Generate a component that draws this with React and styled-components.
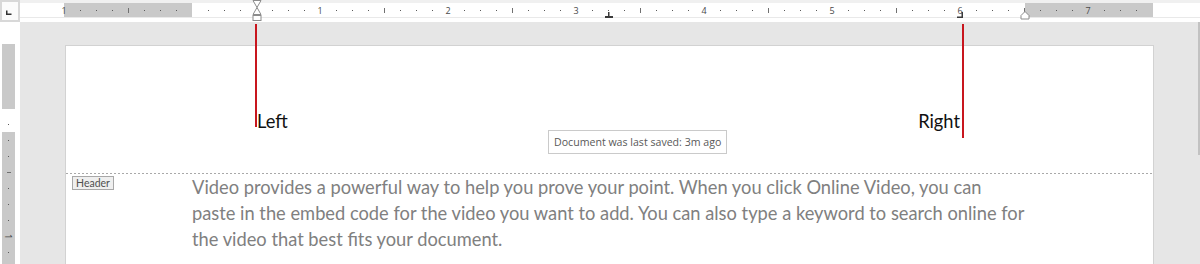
import React from "react";
import styled, { createGlobalStyle } from "styled-components";

const INCH = 128;
const ZERO = 192;

const GlobalStyle = createGlobalStyle`
  html, body {
    margin: 0;
    padding: 0;
    background: #e6e6e6;
  }
  body {
    font-family: "Open Sans", "Liberation Sans", sans-serif;
  }
`;

const Screen = styled.div`
  position: relative;
  width: 1200px;
  height: 264px;
  overflow: hidden;
  display: grid;
  grid-template-columns: 20px 1fr;
  grid-template-rows: 22px 1fr;
  background: #e6e6e6;
`;

/* ---------- tab selector (top-left corner) ---------- */

const TabSelector = styled.div`
  box-sizing: border-box;
  width: 20px;
  height: 22px;
  border: 2px solid #d8d8d8;
  background: #fbfbfb;
  z-index: 2;
`;

/* ---------- horizontal ruler ---------- */

const HRuler = styled.div`
  position: relative;
  box-sizing: border-box;
  background: #fff;
  border-top: 3px solid #f0f0f0;
  z-index: 2;
`;

const HTrack = styled.div`
  display: flex;
  height: 14px;
  padding-left: 36px;
  border-bottom: 1px solid #e9e9e9;
  background: linear-gradient(
    to right,
    #fff 0 44px,
    #c9c9c9 44px 172px,
    #fff 172px 1005px,
    #c9c9c9 1005px 1133px,
    #fff 1133px
  );
`;

const HCell = styled.div`
  flex: 0 0 16px;
  display: flex;
  align-items: center;
  justify-content: center;
`;

const Dot = styled.span`
  width: 1px;
  height: 1px;
  background: #5a5a5a;
`;

const HalfTick = styled.span`
  width: ${({ $vertical }) => ($vertical ? "4px" : "1px")};
  height: ${({ $vertical }) => ($vertical ? "1px" : "5px")};
  background: #707070;
`;

const Num = styled.span`
  font-family: "Open Sans", sans-serif;
  font-size: 9px;
  line-height: 1;
  color: #4a4a4a;
  transform: ${({ $vertical }) => ($vertical ? "rotate(90deg)" : "none")};
`;

const Marker = styled.svg`
  position: absolute;
  top: ${({ $top }) => $top}px;
  left: ${({ $left }) => $left}px;
  overflow: visible;
`;

/* ---------- vertical ruler ---------- */

const VRuler = styled.div`
  background: #fff;
  padding-left: 2px;
`;

const VTrack = styled.div`
  box-sizing: border-box;
  width: 13px;
  height: 100%;
  padding-top: 78px;
  display: flex;
  flex-direction: column;
  background: linear-gradient(
    to bottom,
    #fff 0 22px,
    #c9c9c9 22px 87px,
    #fff 87px 110px,
    #c9c9c9 110px
  );
`;

const VCell = styled.div`
  flex: 0 0 16px;
  display: flex;
  align-items: center;
  justify-content: center;
`;

/* ---------- canvas & page ---------- */

const Canvas = styled.div`
  display: flex;
  overflow: hidden;
`;

const PageArea = styled.div`
  flex: 1;
  padding: 23px 0 0 45px;
`;

const Page = styled.div`
  position: relative;
  box-sizing: border-box;
  width: 1089px;
  height: 260px;
  background: #fff;
  border: 1px solid #d2d2d2;
`;

const Scrollbar = styled.div`
  width: 3px;
  display: flex;
  justify-content: flex-end;
`;

const Thumb = styled.div`
  width: 2px;
  height: 133px;
  background: #c2c2c2;
`;

const HeaderArea = styled.div`
  box-sizing: border-box;
  height: 127px;
  padding: 62px 0 0 191px;
`;

const HeaderRow = styled.div`
  display: flex;
  justify-content: space-between;
  width: 703px;
  font-family: Lato, "Liberation Sans", sans-serif;
  font-size: 18.3px;
  line-height: 26px;
  color: #111;
`;

const Divider = styled.div`
  height: 1px;
  background: repeating-linear-gradient(
    to right,
    #a9a9a9 0 2px,
    transparent 2px 4px
  );
`;

const Body = styled.div`
  position: relative;
  padding-left: 126px;
  font-family: Lato, "Liberation Sans", sans-serif;
  font-size: 18.3px;
  line-height: 26px;
  color: #808080;
  white-space: nowrap;
`;

const HeaderTag = styled.div`
  position: absolute;
  top: 2px;
  left: 6px;
  box-sizing: border-box;
  width: 42px;
  height: 14px;
  display: flex;
  align-items: center;
  justify-content: center;
  border: 1px solid #a8a8a8;
  background: #efefef;
  font-family: Lato, sans-serif;
  font-size: 10.5px;
  line-height: 1;
  color: #505050;
`;

const Tooltip = styled.div`
  position: absolute;
  top: 84px;
  left: 482px;
  box-sizing: border-box;
  height: 24px;
  display: flex;
  align-items: center;
  padding: 0 5px;
  border: 1px solid #cacaca;
  background: #fff;
  font-family: "Open Sans", sans-serif;
  font-size: 10.6px;
  color: #595959;
  white-space: nowrap;
`;

const Guide = styled.div`
  position: absolute;
  left: ${({ $left }) => $left}px;
  top: 24px;
  width: 2px;
  height: ${({ $height }) => $height}px;
  background: #c8161e;
  z-index: 3;
`;

const tickFor = (pos, vertical) => {
  const d = pos - ZERO;
  if (d === 0) return null;
  if (d % INCH === 0) return <Num $vertical={vertical}>{Math.abs(d / INCH)}</Num>;
  if (d % (INCH / 2) === 0) return <HalfTick $vertical={vertical} />;
  return <Dot />;
};

const hPositions = Array.from({ length: 68 }, (_, i) => 64 + i * 16);
const vPositions = Array.from({ length: 10 }, (_, i) => i * 16);

const lines = [
  "Video provides a powerful way to help you prove your point. When you click Online Video, you can",
  "paste in the embed code for the video you want to add. You can also type a keyword to search online for",
  "the video that best fits your document.",
];

export default function App() {
  return (
    <>
      <GlobalStyle />
      <Screen>
        <TabSelector>
          <svg width="16" height="18" viewBox="0 0 16 18">
            <path d="M4.75 8.5 V12.25 H9.5" fill="none" stroke="#333" strokeWidth="1.5" />
          </svg>
        </TabSelector>

        <HRuler>
          <HTrack>
            {hPositions.map((p) => (
              <HCell key={p}>{tickFor(p, false)}</HCell>
            ))}
          </HTrack>
          {/* first-line / hanging / left indent */}
          <Marker $left={232} $top={-3} width="10" height="23" viewBox="0 0 10 23">
            <path d="M1 0.5 H9 L5 7.5 Z" fill="#fff" stroke="#8c8c8c" />
            <path d="M5 7.5 L1 14.5 H9 Z" fill="#fff" stroke="#8c8c8c" />
            <rect x="1" y="15.5" width="8" height="5" fill="#fff" stroke="#8c8c8c" />
          </Marker>
          {/* center tab */}
          <Marker $left={584} $top={9} width="10" height="7" viewBox="0 0 10 7">
            <rect x="4" y="0" width="1.5" height="5" fill="#3a3a3a" />
            <rect x="1" y="4" width="8" height="2" fill="#3a3a3a" />
          </Marker>
          {/* right tab */}
          <Marker $left={936} $top={9} width="8" height="7" viewBox="0 0 8 7">
            <rect x="5.5" y="0" width="1.5" height="6" fill="#3a3a3a" />
            <rect x="1" y="4.5" width="6" height="1.5" fill="#3a3a3a" />
          </Marker>
          {/* right indent */}
          <Marker $left={1000} $top={8} width="10" height="9" viewBox="0 0 10 9">
            <path d="M5 0.5 L9 4.5 V8 H1 V4.5 Z" fill="#fff" stroke="#8c8c8c" />
          </Marker>
        </HRuler>

        <VRuler>
          <VTrack>
            {vPositions.map((p) => (
              <VCell key={p}>{tickFor(ZERO + p, true)}</VCell>
            ))}
          </VTrack>
        </VRuler>

        <Canvas>
          <PageArea>
            <Page>
              <HeaderArea>
                <HeaderRow>
                  <span>Left</span>
                  <span>Right</span>
                </HeaderRow>
              </HeaderArea>
              <Divider />
              <Body>
                <HeaderTag>Header</HeaderTag>
                {lines.map((l) => (
                  <div key={l}>{l}</div>
                ))}
              </Body>
              <Tooltip>Document was last saved: 3m ago</Tooltip>
            </Page>
          </PageArea>
          <Scrollbar>
            <Thumb />
          </Scrollbar>
        </Canvas>

        <Guide $left={255} $height={103} />
        <Guide $left={962} $height={114} />
      </Screen>
    </>
  );
}
